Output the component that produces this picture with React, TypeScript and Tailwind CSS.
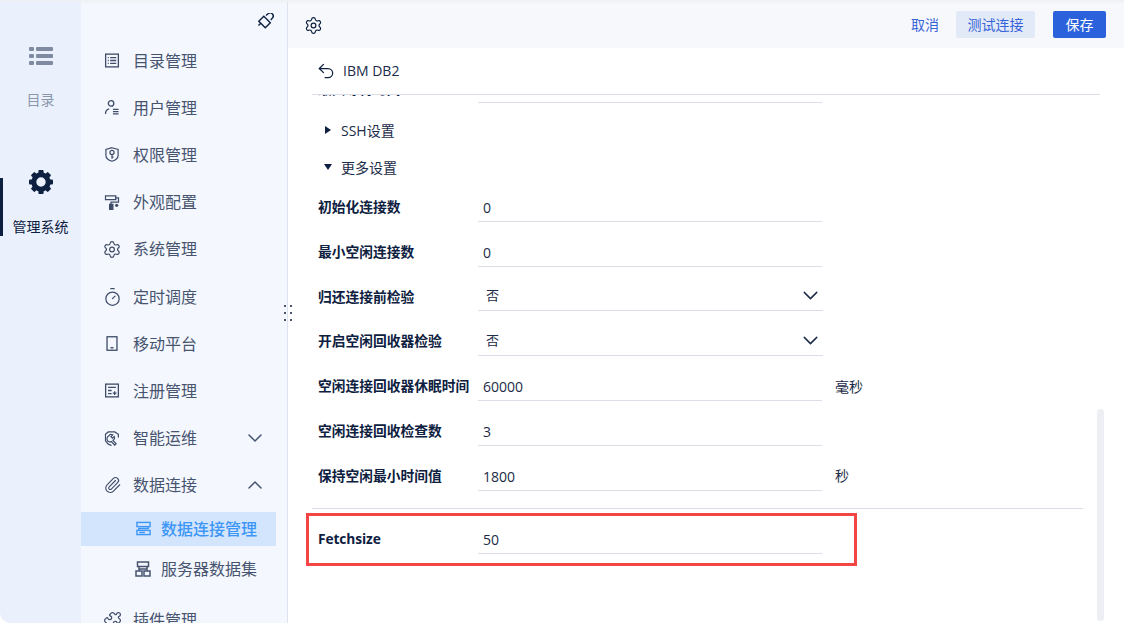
import React from 'react';
import { ChevronDown, ChevronUp, Settings, Undo2, Puzzle, Timer, Paperclip } from 'lucide-react';

type IconProps = { className?: string; strokeWidth?: number };

const CatalogIcon = ({ className }: IconProps) => (
  <svg viewBox="0 0 16 16" fill="none" stroke="currentColor" strokeWidth="1.4" className={className}>
    <rect x="1.2" y="1.200" width="13.600" height="13.600" />
    <path d="M3.500 5h1M6 5h6.500M3.500 8h1M6 8h6.500M3.500 11h1M6 11h6.500" />
  </svg>
);

const UserIcon = ({ className }: IconProps) => (
  <svg viewBox="0 0 16 16" fill="none" stroke="currentColor" strokeWidth="1.400" className={className}>
    <circle cx="7" cy="3.600" r="2.900" />
    <path d="M1 15c0-3 1.600-5 4-5.600M9 10h6M9 12.400h6M9 14.800h6" />
  </svg>
);

const ShieldIcon = ({ className }: IconProps) => (
  <svg viewBox="0 0 16 16" fill="none" stroke="currentColor" strokeWidth="1.300" className={className}>
    <path d="M8 .8l6.500 1.800v6.400c0 3-2.800 5-6.500 6.200-3.700-1.200-6.500-3.200-6.500-6.200V2.600z" />
    <circle cx="8" cy="5.800" r="2.200" />
    <path d="M8 8v4.500M8 10.800h1.600" />
  </svg>
);

const RollerIcon = ({ className }: IconProps) => (
  <svg viewBox="0 0 16 16" fill="none" stroke="currentColor" strokeWidth="1.400" className={className}>
    <path d="M1 .9h11v4H1z" />
    <path d="M12 3H15v4.500H7v2.500" />
    <rect x="5.500" y="10" width="3.400" height="5.500" fill="currentColor" />
    <circle cx="13" cy="11" r="1.700" fill="currentColor" stroke="none" />
  </svg>
);

const PhoneIcon = ({ className }: IconProps) => (
  <svg viewBox="0 0 16 16" fill="none" stroke="currentColor" strokeWidth="1.400" className={className}>
    <rect x="2.700" y=".8" width="10.600" height="14.400" />
    <path d="M6.500 12.500h3" />
  </svg>
);

const RegisterIcon = ({ className }: IconProps) => (
  <svg viewBox="0 0 16 16" fill="none" stroke="currentColor" strokeWidth="1.400" className={className}>
    <rect x="1.200" y="1.200" width="13.600" height="13.600" />
    <path d="M3.800 4.700h8.400M3.800 8h3.800M3.800 11.300h3.800M8.800 10.800h4M10.800 8.800v4" />
  </svg>
);

const WrenchIcon = ({ className }: IconProps) => (
  <svg viewBox="0 0 16 16" fill="none" stroke="currentColor" strokeWidth="1.300" className={className}>
    <path d="M14.800 7V3.500L11 1H4L1 3.500v7L4 14l3.500 1.500" />
    <path d="M4.500 5.200a3.200 3.200 0 0 1 4.200-1.100L6.900 6l1.600 1.600 1.800-1.800a3.200 3.200 0 0 1-1.200 4.100l3.300 3.700-1.500 1.500-3.500-3.800a3.200 3.200 0 0 1-2.900-5.900z" />
  </svg>
);

const ServerIcon = ({ className }: IconProps) => (
  <svg viewBox="0 0 16 16" fill="none" stroke="currentColor" strokeWidth="1.500" className={className}>
    <rect x="1" y="1.500" width="14" height="4.500" />
    <rect x="1" y="10" width="14" height="4.500" />
    <path d="M13 6v2H3v2M3.500 12.200h6" />
  </svg>
);

const ServerSplitIcon = ({ className }: IconProps) => (
  <svg viewBox="0 0 16 16" fill="none" stroke="currentColor" strokeWidth="1.500" className={className}>
    <rect x="2.500" y="1" width="11" height="4.500" />
    <rect x="1" y="10" width="6" height="5" />
    <rect x="9" y="10" width="6" height="5" />
    <path d="M4 5.500V8h8v-2.500M4 8v2M12 8v2" />
  </svg>
);

const PinIcon = ({ className }: IconProps) => (
  <svg viewBox="0 0 16 16" fill="none" stroke="currentColor" strokeWidth="1.400" className={className}>
    <path d="M.8 8.200l5-5 6.500 6.500-5 5zM8 2.500l2-1.700a2.800 2.800 0 0 1 4.300 4.300L12.800 7M.5 12.500l2-2" />
  </svg>
);

const GearFill = ({ className }: IconProps) => (
  <svg viewBox="0 0 24 24" className={className} fill="currentColor">
    <circle cx="12" cy="12" r="7.200" fill="none" stroke="currentColor" strokeWidth="5" />
    {[0, 45, 90, 135, 180, 225, 270, 315].map(a => (
      <rect key={a} x="9.400" y="0" width="5.200" height="5" rx="1" transform={`rotate(${a} 12 12)`} />
    ))}
  </svg>
);

const ListFill = ({ className }: IconProps) => (
  <svg viewBox="0 0 24 20" className={className} fill="currentColor">
    <rect x="0" y="1" width="5" height="4" rx="1" />
    <rect x="7" y="1" width="17" height="4" rx="1" />
    <rect x="0" y="8" width="5" height="4" rx="1" />
    <rect x="7" y="8" width="17" height="4" rx="1" />
    <rect x="0" y="15" width="5" height="4" rx="1" />
    <rect x="7" y="15" width="17" height="4" rx="1" />
  </svg>
);

const menuItems: { label: string; icon: React.FC<any>; lucide?: string; arrow?: string }[] = [
  { label: '目录管理', icon: CatalogIcon },
  { label: '用户管理', icon: UserIcon },
  { label: '权限管理', icon: ShieldIcon },
  { label: '外观配置', icon: RollerIcon },
  { label: '系统管理', icon: Settings, lucide: 'w-[19px] h-[19px]' },
  { label: '定时调度', icon: Timer, lucide: 'w-[20px] h-[20px]' },
  { label: '移动平台', icon: PhoneIcon },
  { label: '注册管理', icon: RegisterIcon },
  { label: '智能运维', icon: WrenchIcon, arrow: 'down' },
  { label: '数据连接', icon: Paperclip, lucide: 'w-[18px] h-[18px]', arrow: 'up' },
];

const Row = ({ label, value, unit, select, tight, shift }: { label: string; value: string; unit?: string; select?: boolean; tight?: boolean; shift?: boolean }) => (
  <div className="flex h-[29.85px] mb-[15px]">
    <div className={`w-[160px] shrink-0 flex items-center text-[13.75px] font-bold whitespace-nowrap text-[#0d2040] ${shift ? 'pt-[2px]' : 'pt-[1px]'} ${tight ? 'tracking-[-0.1px]' : ''}`}>{label}</div>
    <div className={`flex items-center justify-between h-full border-b border-[#dcdde6] ${select ? 'w-[345px] pl-[8px]' : 'w-[344px] pl-[5px]'} ${shift ? 'pt-[4px]' : select ? '' : 'pt-[2px]'} text-[14px] text-[#1b2b48]`}>
      <span className={select ? 'text-[13px]' : ''}>{value}</span>
      {select && <ChevronDown className="w-[25px] h-[25px] text-[#1b2b48]" strokeWidth={1.4} />}
    </div>
    {unit && <div className="ml-[13px] flex items-center text-[14px] text-[#1b2b48]">{unit}</div>}
  </div>
);

const Section = ({ label, open }: { label: string; open?: boolean }) => (
  <div className="flex items-center h-[37px] pl-[6px] text-[14px] text-[#1b2b48]">
    <span className="w-[17px] flex items-center">
      {open ? (
        <span className="w-0 h-0 border-l-[4px] border-r-[4px] border-t-[6px] border-l-transparent border-r-transparent border-t-[#0d2040]" />
      ) : (
        <span className="ml-[1px] w-0 h-0 border-t-[4px] border-b-[4px] border-l-[6px] border-t-transparent border-b-transparent border-l-[#0d2040]" />
      )}
    </span>
    {label}
  </div>
);

const App: React.FC = () => {
  return (
    <div className="relative flex h-[623px] w-[1124px] overflow-hidden bg-white font-['Open_Sans','Noto_Sans_CJK_SC',sans-serif]">
      {/* top shade */}
      <div className="absolute inset-x-0 top-0 h-[4px] z-10 bg-gradient-to-b from-[#eff0f3] to-transparent" />

      {/* Rail */}
      <aside className="w-[81px] shrink-0 bg-[#eaf1fd] rounded-bl-[10px] flex flex-col items-center">
        <div className="flex flex-col items-center pt-[46px] h-[178px] text-[#8b97aa]">
          <ListFill className="w-[24px] h-[20px] text-[#7f8ba0]" />
          <span className="mt-[24px] text-[14px] leading-[20px]">目录</span>
        </div>
        <div className="relative w-full h-[58px] flex flex-col items-center text-[#0d2040]">
          <span className="absolute left-0 top-0 bottom-0 w-[3px] bg-[#0d2040]" />
          <GearFill className="w-[24px] h-[24px] -mt-[8px] shrink-0" />
          <span className="mt-[23px] text-[14px] leading-[20px] whitespace-nowrap">管理系统</span>
        </div>
      </aside>

      {/* Menu */}
      <nav className="relative w-[207px] shrink-0 bg-[#f4f7fe] border-r border-[#dde3ef] text-[#47546f] overflow-hidden">
        <div className="flex justify-end h-[37px] pt-[13px] pr-[13px]">
          <PinIcon className="w-[16px] h-[16px] text-[#0d2040]" />
        </div>
        <ul>
          {menuItems.map(item => {
            const Icon = item.icon;
            return (
              <li key={item.label} className="flex items-center h-[47.2px] pl-[24px] pr-[20px] text-[16px]">
                <span className="w-[15px] mr-[14px] -translate-x-[0.5px] shrink-0 flex justify-center text-[#3f4d69]">
                  {item.lucide ? (
                    <Icon className={`${item.lucide} shrink-0`} strokeWidth={1.5} />
                  ) : (
                    <Icon className="w-[15px] h-[15px] shrink-0" />
                  )}
                </span>
                <span className="flex-1 -ml-[1px]">{item.label}</span>
                {item.arrow === 'down' && <ChevronDown className="w-[24px] h-[24px]" strokeWidth={1.5} />}
                {item.arrow === 'up' && <ChevronUp className="w-[24px] h-[24px]" strokeWidth={1.5} />}
              </li>
            );
          })}
          <li className="mt-[3px] flex items-center h-[34px] w-[195px] pl-[55px] bg-[#d3e5fc] text-[16px] font-medium text-[#3d96f6]">
            <ServerIcon className="w-[15px] h-[15px] mr-[10px] shrink-0" />
            数据连接管理
          </li>
          <li className="flex items-center h-[40px] mt-[3px] pl-[55px] text-[16px]">
            <ServerSplitIcon className="w-[16px] h-[16px] -ml-[1px] mr-[10px] shrink-0" />
            服务器数据集
          </li>
          <li className="flex items-center h-[47.2px] mt-[8px] pl-[24px] text-[16px]">
            <span className="w-[15px] mr-[13px] shrink-0 flex justify-center text-[#3f4d69]">
              <Puzzle className="w-[19px] h-[19px] shrink-0" strokeWidth={1.5} />
            </span>
            插件管理
          </li>
        </ul>
      </nav>

      {/* Drag handle */}
      <div className="absolute left-[284px] top-[305px] z-10 grid grid-cols-2 gap-x-[4px] gap-y-[5px]">
        {[0, 1, 2, 3, 4, 5].map(i => (
          <span key={i} className="w-[2px] h-[2px] bg-[#4a5670]" />
        ))}
      </div>

      {/* Main */}
      <main className="relative flex-1 min-w-0 flex flex-col">
        <header className="h-[48px] shrink-0 bg-[#f7f8fc] flex items-center pl-[16px] pr-[18px]">
          <Settings className="w-[19px] h-[19px] text-[#0d2040] mt-[2px]" strokeWidth={1.5} />
          <div className="ml-auto flex items-center h-[27px] text-[14px]">
            <span className="text-[#3764d8] mr-[17px]">取消</span>
            <span className="flex items-center justify-center w-[79px] h-full rounded-[2px] bg-[#e2eaf8] text-[#3764d8] mr-[18px]">测试连接</span>
            <span className="flex items-center justify-center w-[53px] h-full rounded-[2px] bg-[#2b62dc] text-white">保存</span>
          </div>
        </header>

        <div className="mx-[24px] h-[47px] shrink-0 border-b border-[#dcdde6] flex items-center pl-[4px] pb-[1px] text-[14px] text-[#1b2b48]">
          <Undo2 className="w-[20px] h-[20px] mr-[7px] text-[#0d2040]" strokeWidth={1.5} />
          IBM DB2
        </div>

        <div className="relative flex-1 min-h-0 overflow-hidden pl-[30px] pr-[41px]">
          <div className="-mt-[22px]">
            <Row label="最大等待时间" value="10000" unit="毫秒" shift />
            <div className="-mt-[6px]" />
            <Section label="SSH设置" />
            <Section label="更多设置" open />
            <div className="h-[6px]" />
            <Row label="初始化连接数" value="0" />
            <Row label="最小空闲连接数" value="0" />
            <Row label="归还连接前检验" value="否" select />
            <Row label="开启空闲回收器检验" value="否" select />
            <Row label="空闲连接回收器休眠时间" value="60000" unit="毫秒" />
            <Row label="空闲连接回收检查数" value="3" />
            <Row label="保持空闲最小时间值" value="1800" unit="秒" />
            <div className="h-[2px]" />
            <div className="h-px bg-[#dcdde6] -ml-[6px] mb-[15px]" />
            <Row label="Fetchsize" value="50" tight />
          </div>
          <div className="absolute right-[20px] top-[314px] w-[7px] h-[212px] rounded-full bg-[#eeeff4]" />
        </div>

        {/* Red annotation */}
        <div className="absolute left-[18px] top-[513px] w-[551px] h-[53px] border-[3px] border-[#f44545]" />
      </main>
    </div>
  );
};

export default App;
